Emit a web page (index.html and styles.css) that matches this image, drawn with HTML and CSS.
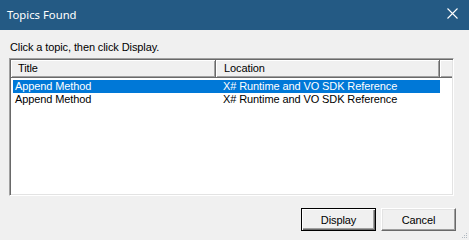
FILE: index.html
```html
<!DOCTYPE html>
<html>
<head>
<meta charset="utf-8">
<link rel="stylesheet" href="styles.css">
</head>
<body>
<div class="dialog">
  <div class="titlebar">
    <span class="title">Topics Found</span>
    <svg class="close" width="12" height="12" viewBox="0 0 12 12"><path d="M0.5 0.5 L10.5 10.5 M10.5 0.5 L0.5 10.5" stroke="#fff" stroke-width="1.1" fill="none"/></svg>
  </div>
  <div class="body">
    <div class="prompt">Click a topic, then click Display.</div>
    <div class="listbox">
      <div class="header">
        <div class="hcell c1">Title</div>
        <div class="hcell c2">Location</div>
        <div class="hcell c3"></div>
      </div>
      <div class="rows">
        <div class="row selected"><span class="cell c1">Append Method</span><span class="cell c2">X# Runtime and VO SDK Reference</span></div>
        <div class="row"><span class="cell c1">Append Method</span><span class="cell c2">X# Runtime and VO SDK Reference</span></div>
      </div>
    </div>
    <div class="buttons">
      <button class="btn default">Display</button>
      <button class="btn">Cancel</button>
    </div>
  </div>
  <svg class="grip" width="6" height="6" viewBox="0 0 6 6"><rect x="4" y="0" width="1" height="1" fill="#b0b8c0"/><rect x="2" y="2" width="1" height="1" fill="#b0b8c0"/><rect x="4" y="2" width="1" height="1" fill="#b0b8c0"/><rect x="0" y="4" width="1" height="1" fill="#b0b8c0"/><rect x="2" y="4" width="1" height="1" fill="#b0b8c0"/><rect x="4" y="4" width="1" height="1" fill="#b0b8c0"/></svg>
</div>
</body>
</html>
```
FILE: styles.css
```css
html, body {
  margin: 0;
  padding: 0;
}
body {
  width: 469px;
  height: 240px;
  overflow: hidden;
  background: #f0f0f0;
  font-family: "Liberation Sans", Arial, sans-serif;
  font-size: 11px;
  letter-spacing: -0.1px;
  color: #000;
}
.dialog {
  position: relative;
  width: 469px;
  height: 240px;
  display: flex;
  flex-direction: column;
}
.titlebar {
  height: 30px;
  flex: none;
  background: #245a84;
  display: flex;
  align-items: center;
  padding-left: 7px;
  padding-right: 10px;
  color: #fff;
}
.title {
  font-family: "Noto Sans", "Open Sans", sans-serif;
  font-size: 11.3px;
  letter-spacing: 0;
  flex: 1;
  margin-top: -2px;
}
.close {
  margin-top: -2px;
}
.body {
  padding: 11px 0 0 9px;
  display: flex;
  flex-direction: column;
}
.prompt {
  height: 13px;
  line-height: 13px;
  padding-left: 1px;
  margin-bottom: 4px;
}
.listbox {
  width: 445px;
  height: 138px;
  box-sizing: border-box;
  border-style: solid;
  border-width: 1px;
  border-color: #a0a0a0 #ffffff #ffffff #a0a0a0;
  box-shadow: inset 1px 1px 0 #696969, inset -1px -1px 0 #e3e3e3;
  background: #fff;
  padding: 1px;
  display: flex;
  flex-direction: column;
}
.header {
  display: flex;
  height: 18px;
  flex: none;
}
.hcell {
  box-sizing: border-box;
  height: 18px;
  line-height: 16px;
  background: #f0f0f0;
  border-right: 1px solid #696969;
  border-bottom: 1px solid #696969;
  box-shadow: inset 1px 1px 0 #ffffff, inset -1px -1px 0 #a0a0a0;
  white-space: nowrap;
}
.hcell.c1 { width: 205px; padding-left: 7px; }
.hcell.c2 { width: 224px; padding-left: 8px; }
.hcell.c3 { width: 12px; border-right: none; box-shadow: inset 1px 1px 0 #ffffff, inset 0 -1px 0 #a0a0a0; }
.rows {
  padding: 2px 0 0 2px;
}
.row {
  display: flex;
  width: 427px;
  height: 13px;
  line-height: 13px;
  white-space: nowrap;
}
.row.selected {
  background: #0078d7;
  color: #fff;
}
.cell.c1 { width: 201px; padding-left: 2px; }
.cell.c2 { padding-left: 7px; }
.buttons {
  display: flex;
  justify-content: flex-end;
  gap: 5px;
  margin-top: 12px;
  padding-right: 13px;
}
.btn {
  width: 75px;
  height: 23px;
  box-sizing: border-box;
  margin: 0;
  padding: 0;
  font-family: "Liberation Sans", Arial, sans-serif;
  font-size: 11px;
  letter-spacing: -0.1px;
  color: #000;
  background: #f0f0f0;
  border-style: solid;
  border-width: 1px;
  border-color: #ffffff #696969 #696969 #ffffff;
  box-shadow: inset -1px -1px 0 #a0a0a0, inset 1px 1px 0 #e3e3e3;
}
.btn.default {
  border: 1px solid #000;
  box-shadow: inset 1px 1px 0 #ffffff, inset -1px -1px 0 #696969, inset -2px -2px 0 #a0a0a0;
}
.grip {
  position: absolute;
  right: 1px;
  bottom: 1px;
}
```
